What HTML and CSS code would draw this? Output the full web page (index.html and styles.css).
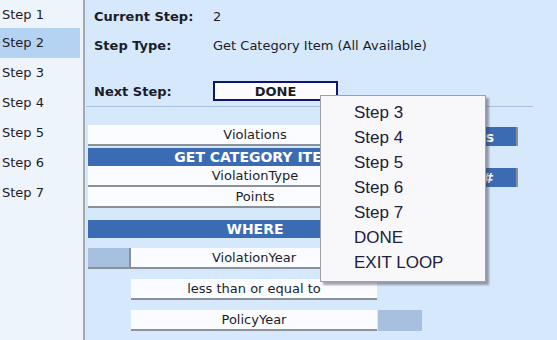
FILE: index.html
```html
<!DOCTYPE html>
<html lang="en">

<head>
    <meta charset="UTF-8">
    <title>Step Editor</title>
    <link rel="stylesheet" href="styles.css">
</head>

<body>
    <div class="app">
        <ul class="steps">
            <li>Step 1</li>
            <li class="selected">Step 2</li>
            <li>Step 3</li>
            <li>Step 4</li>
            <li>Step 5</li>
            <li>Step 6</li>
            <li>Step 7</li>
        </ul>

        <div class="main">
            <div class="info">
                <div class="info-row">
                    <span class="label">Current Step:</span>
                    <span class="value">2</span>
                </div>
                <div class="info-row type-row">
                    <span class="label">Step Type:</span>
                    <span class="value">Get Category Item (All Available)</span>
                </div>
                <div class="info-row next-row">
                    <span class="label">Next Step:</span>
                    <button class="next-button">DONE</button>
                </div>
            </div>

            <div class="separator"></div>

            <div class="tables">
                <div class="query">
                    <div class="cell field">Violations</div>
                    <div class="cell header">GET CATEGORY ITEM</div>
                    <div class="cell field">ViolationType</div>
                    <div class="cell field">Points</div>
                    <div class="cell header where">WHERE</div>
                    <div class="cond-row">
                        <div class="cell swatch"></div>
                        <div class="cell field mid">ViolationYear</div>
                    </div>
                    <div class="cond-row">
                        <div class="spacer"></div>
                        <div class="cell field mid">less than or equal to</div>
                    </div>
                    <div class="cond-row">
                        <div class="spacer"></div>
                        <div class="cell field mid">PolicyYear</div>
                        <div class="cell swatch end"></div>
                    </div>
                </div>

                <div class="side">
                    <div class="cell header side-top">Fields</div>
                    <div class="cell header side-hash">Item #</div>
                </div>
            </div>

            <ul class="dropdown">
                <li>Step 3</li>
                <li>Step 4</li>
                <li>Step 5</li>
                <li>Step 6</li>
                <li>Step 7</li>
                <li>DONE</li>
                <li>EXIT LOOP</li>
            </ul>
        </div>
    </div>
</body>

</html>
```

FILE: styles.css
```css
*,
*::before,
*::after {
    box-sizing: border-box;
    margin: 0;
    padding: 0;
}

:root {
    --bg: #d6e8fb;
    --side-bg: #eef4fc;
    --selected: #b4d2f2;
    --text: #1c1c28;
    --header: #3b6bb3;
    --swatch: #a8c0e0;
    --cell: #fafcff;
    --edge: #8c9098;
}

html,
body {
    width: 557px;
    height: 340px;
    overflow: hidden;
}

body {
    font-family: "DejaVu Sans", Verdana, sans-serif;
    font-size: 13px;
    color: var(--text);
    background-color: var(--bg);
}

.app {
    display: flex;
    height: 340px;
    position: relative;
}

/* left step list */
.steps {
    list-style: none;
    width: 85px;
    flex-shrink: 0;
    background-color: var(--side-bg);
    border-right: 2px solid #a4aab2;
}

.steps li {
    height: 30px;
    line-height: 30px;
    padding-left: 2px;
    margin-right: 3px;
}

.steps li:first-child {
    margin-top: -2px;
    line-height: 34px;
}

.steps .selected {
    background-color: var(--selected);
}

.main {
    flex: 1;
    background-color: var(--bg);
}

/* step info */
.info {
    padding: 6px 0 0 9px;
}

.info-row {
    display: flex;
    align-items: center;
    height: 20px;
}

.type-row {
    margin-top: 9px;
}

.next-row {
    margin-top: 26px;
}

.label {
    width: 119px;
    font-weight: bold;
}

.next-button {
    width: 125px;
    height: 20px;
    border: 2px solid #14146e;
    background-color: #fcfcff;
    font-family: inherit;
    font-size: 13px;
    font-weight: bold;
    color: var(--text);
}

.separator {
    height: 1px;
    margin: 5px 24px 0 1px;
    background-color: #a6c0de;
}

/* query tables */
.tables {
    display: flex;
    padding: 18px 0 0 3px;
}

.query {
    width: 334px;
    display: flex;
    flex-direction: column;
}

.cell {
    height: 21px;
    display: flex;
    align-items: center;
    justify-content: center;
    font-size: 13px;
    white-space: nowrap;
    overflow: hidden;
}

.field {
    background-color: var(--cell);
    border-bottom: 2px solid var(--edge);
}

.header {
    height: 18px;
    background-color: var(--header);
    color: #fff;
    font-size: 14px;
    font-weight: bold;
    margin-top: 2px;
}

.where {
    margin-top: 12px;
    margin-bottom: 10px;
}

.cond-row {
    display: flex;
    margin-bottom: 10px;
}

.swatch {
    width: 43px;
    background-color: var(--swatch);
    border-right: 2px solid var(--edge);
    border-bottom: 2px solid var(--edge);
}

.swatch.end {
    width: 44px;
    margin-left: 1px;
    border-right: none;
    border-bottom: none;
}

.spacer {
    width: 43px;
}

.mid {
    width: 246px;
}

.side {
    width: 88px;
    margin-left: 8px;
    display: flex;
    flex-direction: column;
}

.side-top,
.side-hash {
    height: 19px;
    border-right: 2px solid var(--edge);
    justify-content: flex-end;
    padding-right: 22px;
}

.side-top {
    margin-top: 2px;
}

.side-hash {
    margin-top: 22px;
}

/* open menu of next step */
.dropdown {
    position: absolute;
    left: 320px;
    top: 95px;
    width: 166px;
    height: 187px;
    list-style: none;
    background-color: #f8f8fb;
    border: 1px solid #a0a0a4;
    box-shadow: 3px 3px 2px rgba(60, 60, 70, 0.45);
    padding-top: 4px;
    font-family: "Liberation Sans", Arial, sans-serif;
    font-size: 17px;
    color: #20203a;
}

.dropdown li {
    height: 25px;
    line-height: 25px;
    padding-left: 33px;
}
```
